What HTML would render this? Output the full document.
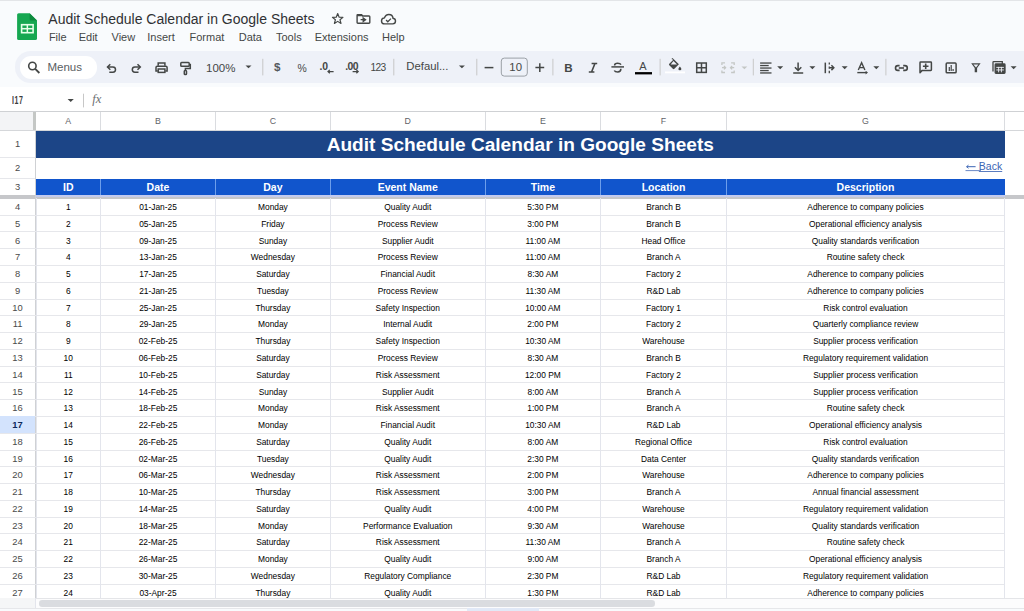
<!DOCTYPE html>
<html><head><meta charset="utf-8"><style>
*{margin:0;padding:0;box-sizing:border-box}
html,body{width:1024px;height:611px;overflow:hidden;background:#f9fbfd;font-family:"Liberation Sans",sans-serif;position:relative}
.abs{position:absolute}
#topline{position:absolute;left:0;top:0;width:1024px;height:1px;background:#e3e5e8}
#title{position:absolute;left:48.3px;top:10.2px;font-size:14px;line-height:18px;color:#303134;white-space:nowrap}
.menu{position:absolute;top:30.5px;font-size:11px;line-height:13px;color:#444746;white-space:nowrap}
#toolbar{position:absolute;left:14.6px;top:51.4px;width:1040px;height:31.2px;border-radius:15.6px;background:#eef1f8}
#search{position:absolute;left:19.5px;top:56.3px;width:77.8px;height:22.4px;border-radius:11.2px;background:#fff}
.tt{position:absolute;font-size:11px;line-height:13px;color:#444746;white-space:nowrap}
.sep{position:absolute;top:58.8px;width:1px;height:16.6px;background:#c7c7c7}
.ico{position:absolute}
#fbar{position:absolute;left:0;top:87px;width:1024px;height:24.4px;background:#fff}
#fbarline{position:absolute;left:0;top:111.2px;width:1024px;height:1px;background:#cfd1d4}
#grid{position:absolute;left:0;top:0;width:1024px;height:611px}
#gridbg{position:absolute;left:0;top:112px;width:1024px;height:499px;background:#fff}
.hl{position:absolute;left:0;width:1005px;height:1px;background:#e6e7eb}
.vl{position:absolute;top:198px;width:1px;height:400px;background:#e3e5ec}
.rn{position:absolute;left:0;width:35px;height:16.775px;line-height:16.775px;padding-top:0.6px;text-align:center;font-size:9.4px;color:#4a4a4a}
.rn.sel{background:#d3e3fd;color:#0b2a5c;font-weight:bold}
.cell{position:absolute;height:16.775px;line-height:16.775px;padding-top:0.6px;text-align:center;font-size:8.4px;color:#000;white-space:nowrap;overflow:hidden}
#corner{position:absolute;left:0;top:112px;width:33.5px;height:18.6px;background:#f3f4f6}
#cornerbar{position:absolute;left:33.4px;top:112px;width:2.6px;height:18.6px;background:#c4c7c5}
#hdrline{position:absolute;left:0;top:130.2px;width:1024px;height:1px;background:#d5d7da}
#hdrtop{position:absolute;left:0;top:111.4px;width:1024px;height:1px;background:#cfd1d4}
.ch{position:absolute;top:112px;height:18.6px;line-height:18.6px;text-align:center;font-size:8.8px;color:#5f6368}
.chl{position:absolute;top:112px;width:1px;height:18.6px;background:#dadce0}
#r1{position:absolute;left:36px;top:131.4px;width:968.5px;height:26.6px;background:#1c4587;color:#fff;font-weight:bold;font-size:19.1px;line-height:25.9px;padding-top:0.8px;text-align:center;white-space:nowrap}
#r3{position:absolute;left:36px;top:178.6px;width:968.5px;height:16.6px;background:#1155cc}
.hc{position:absolute;top:178.6px;height:16.6px;line-height:16.6px;padding-top:0.5px;text-align:center;color:#fff;font-weight:bold;font-size:10.5px;white-space:nowrap}
.hcl{position:absolute;top:178.6px;width:1px;height:16.6px;background:#6d9eeb}
#freeze{position:absolute;left:0;top:195.2px;width:1024px;height:3.4px;background:#c6c7ca}
#freezeb{position:absolute;left:36px;top:195.2px;width:968.5px;height:1.5px;background:#c3cbee}
#back{position:absolute;right:21.8px;top:158.5px;font-size:10.5px;line-height:14px;color:#3a64b4;text-decoration:underline;text-decoration-color:#5a7cc0;white-space:nowrap}
.rnf{position:absolute;left:0;width:35px;text-align:center;padding-top:0px;font-size:9.4px;color:#4a4a4a}
#rhline{position:absolute;left:35.4px;top:130.6px;width:1px;height:470px;background:#cfd1d4}
#hscroll{position:absolute;left:0;top:598px;width:1024px;height:10px;background:#fcfcfd}
#hscrollL{position:absolute;left:0;top:598px;width:35.5px;height:10px;background:#f5f6f7}
#thumb{position:absolute;left:38.5px;top:600.2px;width:616.5px;height:6.4px;border-radius:3.2px;background:#dadce0}
#botline{position:absolute;left:0;top:607.8px;width:1024px;height:1px;background:#e6e7ea}
#botbg{position:absolute;left:0;top:608.8px;width:1024px;height:3px;background:#f9fbfd}
#tab{position:absolute;left:467px;top:607.8px;width:71.5px;height:4px;background:#e1e9f7}

</style></head><body>
<div id="topline"></div>
<div id="title">Audit Schedule Calendar in Google Sheets</div>
<div class="menu" style="left:48.9px">File</div>
<div class="menu" style="left:78.7px">Edit</div>
<div class="menu" style="left:111.5px">View</div>
<div class="menu" style="left:147.3px">Insert</div>
<div class="menu" style="left:189.5px">Format</div>
<div class="menu" style="left:238.7px">Data</div>
<div class="menu" style="left:276px">Tools</div>
<div class="menu" style="left:314.7px">Extensions</div>
<div class="menu" style="left:382px">Help</div>
<div id="toolbar"></div>
<div id="search"></div>
<div class="tt" style="left:47.5px;top:60.8px;font-size:11.5px;color:#5a5e62">Menus</div>
<div class="tt" style="left:206px;top:62.2px;font-size:11.5px">100%</div>
<div class="tt" style="left:406.3px;top:60px;font-size:11.3px">Defaul...</div>
<div id="fbar"></div>
<div id="fbarline"></div><svg class="ico" style="left:0;top:0" width="1024" height="112" viewBox="0 0 1024 112">
<g fill="none" stroke="#444746" stroke-width="1.5">
 <!-- search -->
 <circle cx="32.4" cy="66" r="3.7" stroke-width="1.6"/>
 <path d="M35.2 68.8 L39.4 73" stroke-width="1.8"/>
 <!-- undo -->
 <path d="M109.3 72.2 H112.9 A2.6 2.6 0 0 0 112.9 67 H107.8"/>
 <path d="M110.3 64.3 L107.5 67 L110.3 69.7"/>
 <!-- redo -->
 <path d="M138.5 72.2 H134.9 A2.6 2.6 0 0 1 134.9 67 H140"/>
 <path d="M137.5 64.3 L140.3 67 L137.5 69.7"/>
 <!-- print -->
 <path d="M158.2 65.8 V63 H164.9 V65.8"/>
 <path d="M157.8 71 H156 V67.5 Q156 66.2 157.3 66.2 H165.8 Q167.1 66.2 167.1 67.5 V71 H165.3"/>
 <rect x="158.2" y="69" width="6.7" height="3.4"/>
 <!-- paint format -->
 <rect x="180.8" y="62.6" width="8.4" height="3.6" rx="0.8"/>
 <path d="M189.2 64.4 H190.3 V68.4 H185.4 V70.3"/>
 <rect x="184.3" y="70.4" width="2.2" height="4.2" rx="0.8"/>
</g>
<!-- separators -->
<g fill="#c7c7c7">
 <rect x="262.3" y="58.8" width="1" height="16.6"/>
 <rect x="393.3" y="58.8" width="1" height="16.6"/>
 <rect x="476.3" y="58.8" width="1" height="16.6"/>
 <rect x="552.4" y="58.8" width="1" height="16.6"/>
 <rect x="659.6" y="58.8" width="1" height="16.6"/>
 <rect x="752.8" y="58.8" width="1" height="16.6"/>
 <rect x="885.4" y="58.8" width="1" height="16.6"/>
</g>
<!-- dropdown triangles -->
<g fill="#444746">
 <path d="M245.5 65.4 H251.5 L248.5 68.3 Z"/>
 <path d="M458.9 65.4 H464.9 L461.9 68.3 Z"/>
 <path d="M777.2 66.2 H783.2 L780.2 69.2 Z"/>
 <path d="M809.4 66.2 H815.4 L812.4 69.2 Z"/>
 <path d="M841.7 66.2 H847.7 L844.7 69.2 Z"/>
 <path d="M873.3 66.2 H879.3 L876.3 69.2 Z"/>
 <path d="M1010.6 66.2 H1016.6 L1013.6 69.2 Z"/>
 <path d="M67.6 99 H73.8 L70.7 102 Z"/>
</g>
<path d="M741.5 66.4 H747.3 L744.4 69.3 Z" fill="#c4c7c5"/>
<!-- minus/plus -->
<g stroke="#444746" stroke-width="1.5">
 <path d="M484.6 67.6 H493.4"/>
 <path d="M535.4 67.6 H544.2 M539.8 63.2 V72"/>
</g>
<rect x="501.3" y="58.1" width="26" height="18" rx="3" fill="none" stroke="#9aa0a6" stroke-width="1"/>
<!-- strikethrough -->
<g fill="none" stroke="#444746" stroke-width="1.5">
 <path d="M611.4 66.9 H624"/>
 <path d="M621 64.6 Q620.2 63.3 617.7 63.3 Q614.6 63.3 614.6 65.4"/>
 <path d="M620.9 68.8 Q620.9 72 617.7 72 Q615 72 614.3 70.5"/>
</g>
<!-- text color A bar -->
<rect x="635" y="72.1" width="17" height="2.3" fill="#000"/>
<!-- fill bucket -->
<g fill="#444746">
 <path d="M671.4 58.9 L672.5 57.9 L674.3 59.7 L678.9 64.3 L674.4 68.8 Q673.6 69.6 672.8 68.8 L669.3 65.3 Q668.6 64.5 669.3 63.8 L673.3 59.8 Z M670.7 64.4 L677 64.4 L673.5 60.9 Z"/>
 <path d="M679.9 66.6 Q681.4 68.4 681.4 69.1 Q681.4 70.3 679.9 70.3 Q678.4 70.3 678.4 69.1 Q678.4 68.4 679.9 66.6 Z"/>
</g>
<rect x="665" y="71.5" width="20" height="1.8" fill="#fff"/>
<!-- borders -->
<g fill="none" stroke="#444746" stroke-width="1.5">
 <rect x="696.7" y="63" width="9.6" height="9.4"/>
 <path d="M701.5 63 V72.4 M696.7 67.7 H706.3"/>
</g>
<!-- merge disabled -->
<g fill="none" stroke="#c4c7c5" stroke-width="1.3">
 <path d="M721.9 65 V62.9 H725 M721.9 70.4 V72.5 H725 M734.2 65 V62.9 H731.1 M734.2 70.4 V72.5 H731.1"/>
 <path d="M722 67.7 H725.5 M730.6 67.7 H734.2 M724 66 L725.6 67.7 L724 69.4 M732.1 66 L730.5 67.7 L732.1 69.4"/>
</g>
<!-- align left -->
<g fill="#444746">
 <rect x="760.1" y="62.4" width="11.4" height="1.3"/>
 <rect x="760.1" y="64.9" width="8.6" height="1.3"/>
 <rect x="760.1" y="67.4" width="11.4" height="1.3"/>
 <rect x="760.1" y="69.9" width="8.6" height="1.3"/>
 <rect x="760.1" y="72.3" width="11.4" height="1.3"/>
</g>
<!-- valign bottom -->
<g fill="none" stroke="#444746" stroke-width="1.5">
 <path d="M798.1 62.5 V70.3 M794.9 67.3 L798.1 70.5 L801.3 67.3"/>
 <path d="M793.2 73 H803.2"/>
</g>
<!-- wrap -->
<g fill="none" stroke="#444746" stroke-width="1.5">
 <path d="M825.3 62.6 V73.2"/>
 <path d="M829.3 62.6 V64.6 M829.3 66.6 V68.8 M829.3 70.8 V73.2" stroke-width="1.3"/>
 <path d="M829.5 67.7 H833.8 M831.4 65.3 L833.8 67.7 L831.4 70.1"/>
</g>
<!-- rotate A -->
<g fill="none" stroke="#444746" stroke-width="1.4">
 <path d="M858.3 70 L861.6 62.8 L864.9 70 M859.5 67.6 H863.7"/>
 <path d="M857.3 72.6 H866.5"/>
</g>
<path d="M865.6 70.8 L868 72.6 L865.6 74.4 Z" fill="#444746"/>
<!-- link -->
<g fill="none" stroke="#444746" stroke-width="1.6">
 <path d="M899.6 65.6 H897.9 Q895.5 65.6 895.5 68 Q895.5 70.4 897.9 70.4 H899.6"/>
 <path d="M903.2 65.6 H904.9 Q907.3 65.6 907.3 68 Q907.3 70.4 904.9 70.4 H903.2"/>
 <path d="M898.8 68 H904"/>
</g>
<!-- comment -->
<g fill="none" stroke="#444746" stroke-width="1.5">
 <path d="M920 72.6 V62.7 Q920 62.1 920.6 62.1 H930.8 Q931.4 62.1 931.4 62.7 V69.8 Q931.4 70.4 930.8 70.4 H922.2 Z" stroke-linejoin="round"/>
 <path d="M925.7 63.5 V69 M922.9 66.25 H928.5" stroke-width="1.6"/>
</g>
<!-- chart -->
<g fill="none" stroke="#444746" stroke-width="1.5">
 <rect x="946.2" y="63" width="9.9" height="9.8" rx="0.9"/>
</g>
<g fill="#444746">
 <rect x="948.7" y="67" width="1.2" height="4"/>
 <rect x="950.6" y="65" width="1.2" height="6"/>
 <rect x="952.5" y="69" width="1.2" height="2"/>
</g>
<!-- filter -->
<path d="M971.2 63.2 H980.6 L977.1 67.9 V72.3 H974.7 V67.9 Z" fill="#444746"/>
<path d="M973.4 64.6 H978.4 L976 67.6 Z" fill="#eef1f8"/>
<!-- functions/calculator -->
<g fill="none" stroke="#444746" stroke-width="1.3">
 <path d="M993 71.5 V62.3 Q993 61.7 993.6 61.7 H1002.3 V64"/>
 <rect x="995.2" y="64" width="9.8" height="9.3" rx="0.8"/>
</g>
<rect x="995.2" y="64" width="9.8" height="9.3" rx="0.8" fill="#444746"/>
<g fill="#eef1f8">
 <rect x="996.3" y="66.9" width="7.6" height="0.9"/>
 <rect x="996.3" y="69.5" width="7.6" height="0.9"/>
 <rect x="998.2" y="66.9" width="0.9" height="5.4"/>
 <rect x="1000.9" y="66.9" width="0.9" height="5.4"/>
</g>
<!-- decimal arrows -->
<g fill="none" stroke="#444746" stroke-width="1.2">
 <path d="M328 71.6 H333.6 M329.8 69.9 L328 71.6 L329.8 73.3"/>
 <path d="M352.6 71.6 H358.2 M356.4 69.9 L358.2 71.6 L356.4 73.3"/>
</g>
<!-- italic -->
<path d="M591.6 63.6 H597.2 M594.9 63.6 L591.6 71.9 M588.8 71.9 H594.4" fill="none" stroke="#444746" stroke-width="1.5"/>
<!-- formula bar separator and fx -->
<rect x="83" y="93.7" width="1" height="13.7" fill="#c7c7c7"/>
</svg>
<div class="tt" style="left:274px;top:60.3px;font-size:11.6px;font-weight:bold;color:#55595d">$</div>
<div class="tt" style="left:297.4px;top:61.5px;font-size:10.4px">%</div>
<div class="tt" style="left:319.6px;top:59.5px;font-size:10.4px;font-weight:bold;letter-spacing:-0.3px">.0</div>
<div class="tt" style="left:345.2px;top:59.5px;font-size:10.4px;font-weight:bold;letter-spacing:-0.6px">.00</div>
<div class="tt" style="left:370.6px;top:61px;font-size:10.2px;letter-spacing:-0.75px">123</div>
<div class="tt" style="left:509.3px;top:61.2px;font-size:11.4px">10</div>
<div class="tt" style="left:564.2px;top:60.6px;font-size:11.6px;font-weight:bold">B</div>
<div class="tt" style="left:639.2px;top:60.3px;font-size:11px">A</div>
<div class="tt" style="left:11.8px;top:94.2px;font-size:10.6px;font-weight:bold;letter-spacing:0.9px;transform:scaleX(0.66);transform-origin:0 0;color:#3c3c3c">I17</div>
<div class="tt" style="left:92.2px;top:93px;font-size:12.6px;font-style:italic;font-family:'Liberation Serif',serif;color:#6b6e72">fx</div>

<div id="gridbg"></div>
<div id="hdrtop"></div>
<div id="corner"></div>
<div id="cornerbar"></div>
<div class="ch" style="left:36px;width:64.5px">A</div>
<div class="ch" style="left:100.5px;width:115px">B</div>
<div class="ch" style="left:215.5px;width:114.8px">C</div>
<div class="ch" style="left:330.3px;width:154.9px">D</div>
<div class="ch" style="left:485.2px;width:115.3px">E</div>
<div class="ch" style="left:600.5px;width:126px">F</div>
<div class="ch" style="left:726.5px;width:278px">G</div>
<div class="chl" style="left:100px"></div>
<div class="chl" style="left:215px"></div>
<div class="chl" style="left:330px"></div>
<div class="chl" style="left:485px"></div>
<div class="chl" style="left:600px"></div>
<div class="chl" style="left:726px"></div>
<div class="chl" style="left:1004px"></div>
<div id="hdrline"></div>
<div class="rnf" style="top:131.4px;height:25.9px;line-height:25.9px">1</div>
<div class="rnf" style="top:157.3px;height:21.4px;line-height:21.4px">2</div>
<div class="rnf" style="top:178.7px;height:16.5px;line-height:16.5px">3</div>
<div class="hl" style="top:156.8px;left:0;width:36px"></div>
<div class="hl" style="top:178.2px;left:0;width:36px"></div>
<div id="r1">Audit Schedule Calendar in Google Sheets</div>
<div id="back">Back</div><svg class="ico" style="left:965px;top:158px" width="16" height="16" viewBox="965 158 16 16"><path d="M966.8 166.7 H975.6" stroke="#3a64b4" stroke-width="1"/><path d="M968.5 165.1 L966.5 166.7 L968.5 168.3" fill="none" stroke="#3a64b4" stroke-width="0.9"/><path d="M965.5 170.6 H981" stroke="#5a7cc0" stroke-width="0.9"/></svg>
<div id="r3"></div>
<div class="hc" style="left:36px;width:64.5px">ID</div>
<div class="hc" style="left:100.5px;width:115px">Date</div>
<div class="hc" style="left:215.5px;width:114.8px">Day</div>
<div class="hc" style="left:330.3px;width:154.9px">Event Name</div>
<div class="hc" style="left:485.2px;width:115.3px">Time</div>
<div class="hc" style="left:600.5px;width:126px">Location</div>
<div class="hc" style="left:726.5px;width:278px">Description</div>
<div class="hcl" style="left:100px"></div>
<div class="hcl" style="left:215px"></div>
<div class="hcl" style="left:330px"></div>
<div class="hcl" style="left:485px"></div>
<div class="hcl" style="left:600px"></div>
<div class="hcl" style="left:726px"></div>
<div id="freeze"></div><div id="freezeb"></div>
<div id="rhline"></div>
<svg class="ico" style="left:16px;top:12px" width="23" height="30" viewBox="0 0 23 30">
 <path d="M2.6 1.2 H13.6 L21 8.6 V26.4 Q21 28 19.4 28 H2.6 Q1.1 28 1.1 26.4 V2.7 Q1.1 1.2 2.6 1.2 Z" fill="#16a751"/>
 <path d="M13.6 1.2 L21 8.6 H15.2 Q13.6 8.6 13.6 7 Z" fill="#0d8a3e"/>
 <rect x="5.6" y="12.7" width="11.5" height="8" fill="none" stroke="#e6ffe9" stroke-width="1.6"/>
 <line x1="5.6" y1="16.7" x2="17.1" y2="16.7" stroke="#e6ffe9" stroke-width="1.5"/>
 <line x1="11.35" y1="12.7" x2="11.35" y2="20.7" stroke="#e6ffe9" stroke-width="1.5"/>
</svg>
<svg class="ico" style="left:331.2px;top:11.6px" width="13.4" height="13.4" viewBox="0 0 24 24"><path d="M12 2.8 L14.6 9.3 L21.4 9.6 L16.1 13.9 L17.9 20.6 L12 16.8 L6.1 20.6 L7.9 13.9 L2.6 9.6 L9.4 9.3 Z" fill="none" stroke="#444746" stroke-width="2.1" stroke-linejoin="round"/></svg>
<svg class="ico" style="left:355.5px;top:14px" width="15" height="10" viewBox="0 0 15 10"><path d="M1.5 0.8 H5.6 L6.8 2 H13 Q13.8 2 13.8 2.8 V8.6 Q13.8 9.3 13 9.3 H1.9 Q1.1 9.3 1.1 8.6 V1.2 Q1.1 0.8 1.5 0.8 Z" fill="none" stroke="#444746" stroke-width="1.4"/><path d="M1.1 0.8 H5.6 L6.8 2.2 H1.1 Z" fill="#444746"/><path d="M4.6 5.7 H8 M7.2 3.9 L9.6 5.7 L7.2 7.5 Z" stroke="#444746" stroke-width="1.3" fill="#444746"/></svg>
<svg class="ico" style="left:379.5px;top:12px" width="17" height="14" viewBox="0 0 24 20"><path d="M6.5 17 Q2 17 2 12.8 Q2 8.8 6.2 8.4 Q7.8 3.5 12.5 3.5 Q17.8 3.5 18.5 9 Q22 9.5 22 13 Q22 17 18 17 Z" fill="none" stroke="#444746" stroke-width="2"/><path d="M8.5 11.5 L11 14 L15.5 9.5" fill="none" stroke="#444746" stroke-width="1.8"/></svg>

<div id="grid">
<div class="hl" style="top:214.68px"></div><div class="hl" style="top:231.45px"></div><div class="hl" style="top:248.22px"></div><div class="hl" style="top:265px"></div><div class="hl" style="top:281.77px"></div><div class="hl" style="top:298.55px"></div><div class="hl" style="top:315.32px"></div><div class="hl" style="top:332.1px"></div><div class="hl" style="top:348.88px"></div><div class="hl" style="top:365.65px"></div><div class="hl" style="top:382.42px"></div><div class="hl" style="top:399.2px"></div><div class="hl" style="top:415.98px"></div><div class="hl" style="top:432.75px"></div><div class="hl" style="top:449.52px"></div><div class="hl" style="top:466.3px"></div><div class="hl" style="top:483.07px"></div><div class="hl" style="top:499.85px"></div><div class="hl" style="top:516.62px"></div><div class="hl" style="top:533.4px"></div><div class="hl" style="top:550.17px"></div><div class="hl" style="top:566.95px"></div><div class="hl" style="top:583.73px"></div><div class="hl" style="top:600.5px"></div><div class="vl" style="left:35.5px"></div><div class="vl" style="left:100px"></div><div class="vl" style="left:215px"></div><div class="vl" style="left:329.8px"></div><div class="vl" style="left:484.7px"></div><div class="vl" style="left:600px"></div><div class="vl" style="left:726px"></div><div class="vl" style="left:1004px"></div><div class="rn" style="top:198.4px">4</div><div class="cell" style="top:198.4px;left:36px;width:64.5px">1</div><div class="cell" style="top:198.4px;left:100.5px;width:115px">01-Jan-25</div><div class="cell" style="top:198.4px;left:215.5px;width:114.8px">Monday</div><div class="cell" style="top:198.4px;left:330.3px;width:154.9px">Quality Audit</div><div class="cell" style="top:198.4px;left:485.2px;width:115.3px">5:30 PM</div><div class="cell" style="top:198.4px;left:600.5px;width:126px">Branch B</div><div class="cell" style="top:198.4px;left:726.5px;width:278px">Adherence to company policies</div><div class="rn" style="top:215.18px">5</div><div class="cell" style="top:215.18px;left:36px;width:64.5px">2</div><div class="cell" style="top:215.18px;left:100.5px;width:115px">05-Jan-25</div><div class="cell" style="top:215.18px;left:215.5px;width:114.8px">Friday</div><div class="cell" style="top:215.18px;left:330.3px;width:154.9px">Process Review</div><div class="cell" style="top:215.18px;left:485.2px;width:115.3px">3:00 PM</div><div class="cell" style="top:215.18px;left:600.5px;width:126px">Branch B</div><div class="cell" style="top:215.18px;left:726.5px;width:278px">Operational efficiency analysis</div><div class="rn" style="top:231.95px">6</div><div class="cell" style="top:231.95px;left:36px;width:64.5px">3</div><div class="cell" style="top:231.95px;left:100.5px;width:115px">09-Jan-25</div><div class="cell" style="top:231.95px;left:215.5px;width:114.8px">Sunday</div><div class="cell" style="top:231.95px;left:330.3px;width:154.9px">Supplier Audit</div><div class="cell" style="top:231.95px;left:485.2px;width:115.3px">11:00 AM</div><div class="cell" style="top:231.95px;left:600.5px;width:126px">Head Office</div><div class="cell" style="top:231.95px;left:726.5px;width:278px">Quality standards verification</div><div class="rn" style="top:248.72px">7</div><div class="cell" style="top:248.72px;left:36px;width:64.5px">4</div><div class="cell" style="top:248.72px;left:100.5px;width:115px">13-Jan-25</div><div class="cell" style="top:248.72px;left:215.5px;width:114.8px">Wednesday</div><div class="cell" style="top:248.72px;left:330.3px;width:154.9px">Process Review</div><div class="cell" style="top:248.72px;left:485.2px;width:115.3px">11:00 AM</div><div class="cell" style="top:248.72px;left:600.5px;width:126px">Branch A</div><div class="cell" style="top:248.72px;left:726.5px;width:278px">Routine safety check</div><div class="rn" style="top:265.5px">8</div><div class="cell" style="top:265.5px;left:36px;width:64.5px">5</div><div class="cell" style="top:265.5px;left:100.5px;width:115px">17-Jan-25</div><div class="cell" style="top:265.5px;left:215.5px;width:114.8px">Saturday</div><div class="cell" style="top:265.5px;left:330.3px;width:154.9px">Financial Audit</div><div class="cell" style="top:265.5px;left:485.2px;width:115.3px">8:30 AM</div><div class="cell" style="top:265.5px;left:600.5px;width:126px">Factory 2</div><div class="cell" style="top:265.5px;left:726.5px;width:278px">Adherence to company policies</div><div class="rn" style="top:282.27px">9</div><div class="cell" style="top:282.27px;left:36px;width:64.5px">6</div><div class="cell" style="top:282.27px;left:100.5px;width:115px">21-Jan-25</div><div class="cell" style="top:282.27px;left:215.5px;width:114.8px">Tuesday</div><div class="cell" style="top:282.27px;left:330.3px;width:154.9px">Process Review</div><div class="cell" style="top:282.27px;left:485.2px;width:115.3px">11:30 AM</div><div class="cell" style="top:282.27px;left:600.5px;width:126px">R&amp;D Lab</div><div class="cell" style="top:282.27px;left:726.5px;width:278px">Adherence to company policies</div><div class="rn" style="top:299.05px">10</div><div class="cell" style="top:299.05px;left:36px;width:64.5px">7</div><div class="cell" style="top:299.05px;left:100.5px;width:115px">25-Jan-25</div><div class="cell" style="top:299.05px;left:215.5px;width:114.8px">Thursday</div><div class="cell" style="top:299.05px;left:330.3px;width:154.9px">Safety Inspection</div><div class="cell" style="top:299.05px;left:485.2px;width:115.3px">10:00 AM</div><div class="cell" style="top:299.05px;left:600.5px;width:126px">Factory 1</div><div class="cell" style="top:299.05px;left:726.5px;width:278px">Risk control evaluation</div><div class="rn" style="top:315.82px">11</div><div class="cell" style="top:315.82px;left:36px;width:64.5px">8</div><div class="cell" style="top:315.82px;left:100.5px;width:115px">29-Jan-25</div><div class="cell" style="top:315.82px;left:215.5px;width:114.8px">Monday</div><div class="cell" style="top:315.82px;left:330.3px;width:154.9px">Internal Audit</div><div class="cell" style="top:315.82px;left:485.2px;width:115.3px">2:00 PM</div><div class="cell" style="top:315.82px;left:600.5px;width:126px">Factory 2</div><div class="cell" style="top:315.82px;left:726.5px;width:278px">Quarterly compliance review</div><div class="rn" style="top:332.6px">12</div><div class="cell" style="top:332.6px;left:36px;width:64.5px">9</div><div class="cell" style="top:332.6px;left:100.5px;width:115px">02-Feb-25</div><div class="cell" style="top:332.6px;left:215.5px;width:114.8px">Thursday</div><div class="cell" style="top:332.6px;left:330.3px;width:154.9px">Safety Inspection</div><div class="cell" style="top:332.6px;left:485.2px;width:115.3px">10:30 AM</div><div class="cell" style="top:332.6px;left:600.5px;width:126px">Warehouse</div><div class="cell" style="top:332.6px;left:726.5px;width:278px">Supplier process verification</div><div class="rn" style="top:349.38px">13</div><div class="cell" style="top:349.38px;left:36px;width:64.5px">10</div><div class="cell" style="top:349.38px;left:100.5px;width:115px">06-Feb-25</div><div class="cell" style="top:349.38px;left:215.5px;width:114.8px">Saturday</div><div class="cell" style="top:349.38px;left:330.3px;width:154.9px">Process Review</div><div class="cell" style="top:349.38px;left:485.2px;width:115.3px">8:30 AM</div><div class="cell" style="top:349.38px;left:600.5px;width:126px">Branch B</div><div class="cell" style="top:349.38px;left:726.5px;width:278px">Regulatory requirement validation</div><div class="rn" style="top:366.15px">14</div><div class="cell" style="top:366.15px;left:36px;width:64.5px">11</div><div class="cell" style="top:366.15px;left:100.5px;width:115px">10-Feb-25</div><div class="cell" style="top:366.15px;left:215.5px;width:114.8px">Saturday</div><div class="cell" style="top:366.15px;left:330.3px;width:154.9px">Risk Assessment</div><div class="cell" style="top:366.15px;left:485.2px;width:115.3px">12:00 PM</div><div class="cell" style="top:366.15px;left:600.5px;width:126px">Factory 2</div><div class="cell" style="top:366.15px;left:726.5px;width:278px">Supplier process verification</div><div class="rn" style="top:382.92px">15</div><div class="cell" style="top:382.92px;left:36px;width:64.5px">12</div><div class="cell" style="top:382.92px;left:100.5px;width:115px">14-Feb-25</div><div class="cell" style="top:382.92px;left:215.5px;width:114.8px">Sunday</div><div class="cell" style="top:382.92px;left:330.3px;width:154.9px">Supplier Audit</div><div class="cell" style="top:382.92px;left:485.2px;width:115.3px">8:00 AM</div><div class="cell" style="top:382.92px;left:600.5px;width:126px">Branch A</div><div class="cell" style="top:382.92px;left:726.5px;width:278px">Supplier process verification</div><div class="rn" style="top:399.7px">16</div><div class="cell" style="top:399.7px;left:36px;width:64.5px">13</div><div class="cell" style="top:399.7px;left:100.5px;width:115px">18-Feb-25</div><div class="cell" style="top:399.7px;left:215.5px;width:114.8px">Monday</div><div class="cell" style="top:399.7px;left:330.3px;width:154.9px">Risk Assessment</div><div class="cell" style="top:399.7px;left:485.2px;width:115.3px">1:00 PM</div><div class="cell" style="top:399.7px;left:600.5px;width:126px">Branch A</div><div class="cell" style="top:399.7px;left:726.5px;width:278px">Routine safety check</div><div class="rn sel" style="top:416.48px">17</div><div class="cell" style="top:416.48px;left:36px;width:64.5px">14</div><div class="cell" style="top:416.48px;left:100.5px;width:115px">22-Feb-25</div><div class="cell" style="top:416.48px;left:215.5px;width:114.8px">Monday</div><div class="cell" style="top:416.48px;left:330.3px;width:154.9px">Financial Audit</div><div class="cell" style="top:416.48px;left:485.2px;width:115.3px">10:30 AM</div><div class="cell" style="top:416.48px;left:600.5px;width:126px">R&amp;D Lab</div><div class="cell" style="top:416.48px;left:726.5px;width:278px">Operational efficiency analysis</div><div class="rn" style="top:433.25px">18</div><div class="cell" style="top:433.25px;left:36px;width:64.5px">15</div><div class="cell" style="top:433.25px;left:100.5px;width:115px">26-Feb-25</div><div class="cell" style="top:433.25px;left:215.5px;width:114.8px">Saturday</div><div class="cell" style="top:433.25px;left:330.3px;width:154.9px">Quality Audit</div><div class="cell" style="top:433.25px;left:485.2px;width:115.3px">8:00 AM</div><div class="cell" style="top:433.25px;left:600.5px;width:126px">Regional Office</div><div class="cell" style="top:433.25px;left:726.5px;width:278px">Risk control evaluation</div><div class="rn" style="top:450.02px">19</div><div class="cell" style="top:450.02px;left:36px;width:64.5px">16</div><div class="cell" style="top:450.02px;left:100.5px;width:115px">02-Mar-25</div><div class="cell" style="top:450.02px;left:215.5px;width:114.8px">Tuesday</div><div class="cell" style="top:450.02px;left:330.3px;width:154.9px">Quality Audit</div><div class="cell" style="top:450.02px;left:485.2px;width:115.3px">2:30 PM</div><div class="cell" style="top:450.02px;left:600.5px;width:126px">Data Center</div><div class="cell" style="top:450.02px;left:726.5px;width:278px">Quality standards verification</div><div class="rn" style="top:466.8px">20</div><div class="cell" style="top:466.8px;left:36px;width:64.5px">17</div><div class="cell" style="top:466.8px;left:100.5px;width:115px">06-Mar-25</div><div class="cell" style="top:466.8px;left:215.5px;width:114.8px">Wednesday</div><div class="cell" style="top:466.8px;left:330.3px;width:154.9px">Risk Assessment</div><div class="cell" style="top:466.8px;left:485.2px;width:115.3px">2:00 PM</div><div class="cell" style="top:466.8px;left:600.5px;width:126px">Warehouse</div><div class="cell" style="top:466.8px;left:726.5px;width:278px">Adherence to company policies</div><div class="rn" style="top:483.57px">21</div><div class="cell" style="top:483.57px;left:36px;width:64.5px">18</div><div class="cell" style="top:483.57px;left:100.5px;width:115px">10-Mar-25</div><div class="cell" style="top:483.57px;left:215.5px;width:114.8px">Thursday</div><div class="cell" style="top:483.57px;left:330.3px;width:154.9px">Risk Assessment</div><div class="cell" style="top:483.57px;left:485.2px;width:115.3px">3:00 PM</div><div class="cell" style="top:483.57px;left:600.5px;width:126px">Branch A</div><div class="cell" style="top:483.57px;left:726.5px;width:278px">Annual financial assessment</div><div class="rn" style="top:500.35px">22</div><div class="cell" style="top:500.35px;left:36px;width:64.5px">19</div><div class="cell" style="top:500.35px;left:100.5px;width:115px">14-Mar-25</div><div class="cell" style="top:500.35px;left:215.5px;width:114.8px">Saturday</div><div class="cell" style="top:500.35px;left:330.3px;width:154.9px">Quality Audit</div><div class="cell" style="top:500.35px;left:485.2px;width:115.3px">4:00 PM</div><div class="cell" style="top:500.35px;left:600.5px;width:126px">Warehouse</div><div class="cell" style="top:500.35px;left:726.5px;width:278px">Regulatory requirement validation</div><div class="rn" style="top:517.12px">23</div><div class="cell" style="top:517.12px;left:36px;width:64.5px">20</div><div class="cell" style="top:517.12px;left:100.5px;width:115px">18-Mar-25</div><div class="cell" style="top:517.12px;left:215.5px;width:114.8px">Monday</div><div class="cell" style="top:517.12px;left:330.3px;width:154.9px">Performance Evaluation</div><div class="cell" style="top:517.12px;left:485.2px;width:115.3px">9:30 AM</div><div class="cell" style="top:517.12px;left:600.5px;width:126px">Warehouse</div><div class="cell" style="top:517.12px;left:726.5px;width:278px">Quality standards verification</div><div class="rn" style="top:533.9px">24</div><div class="cell" style="top:533.9px;left:36px;width:64.5px">21</div><div class="cell" style="top:533.9px;left:100.5px;width:115px">22-Mar-25</div><div class="cell" style="top:533.9px;left:215.5px;width:114.8px">Saturday</div><div class="cell" style="top:533.9px;left:330.3px;width:154.9px">Risk Assessment</div><div class="cell" style="top:533.9px;left:485.2px;width:115.3px">11:30 AM</div><div class="cell" style="top:533.9px;left:600.5px;width:126px">Branch A</div><div class="cell" style="top:533.9px;left:726.5px;width:278px">Routine safety check</div><div class="rn" style="top:550.67px">25</div><div class="cell" style="top:550.67px;left:36px;width:64.5px">22</div><div class="cell" style="top:550.67px;left:100.5px;width:115px">26-Mar-25</div><div class="cell" style="top:550.67px;left:215.5px;width:114.8px">Monday</div><div class="cell" style="top:550.67px;left:330.3px;width:154.9px">Quality Audit</div><div class="cell" style="top:550.67px;left:485.2px;width:115.3px">9:00 AM</div><div class="cell" style="top:550.67px;left:600.5px;width:126px">Branch A</div><div class="cell" style="top:550.67px;left:726.5px;width:278px">Operational efficiency analysis</div><div class="rn" style="top:567.45px">26</div><div class="cell" style="top:567.45px;left:36px;width:64.5px">23</div><div class="cell" style="top:567.45px;left:100.5px;width:115px">30-Mar-25</div><div class="cell" style="top:567.45px;left:215.5px;width:114.8px">Wednesday</div><div class="cell" style="top:567.45px;left:330.3px;width:154.9px">Regulatory Compliance</div><div class="cell" style="top:567.45px;left:485.2px;width:115.3px">2:30 PM</div><div class="cell" style="top:567.45px;left:600.5px;width:126px">R&amp;D Lab</div><div class="cell" style="top:567.45px;left:726.5px;width:278px">Regulatory requirement validation</div><div class="rn" style="top:584.23px">27</div><div class="cell" style="top:584.23px;left:36px;width:64.5px">24</div><div class="cell" style="top:584.23px;left:100.5px;width:115px">03-Apr-25</div><div class="cell" style="top:584.23px;left:215.5px;width:114.8px">Thursday</div><div class="cell" style="top:584.23px;left:330.3px;width:154.9px">Quality Audit</div><div class="cell" style="top:584.23px;left:485.2px;width:115.3px">1:30 PM</div><div class="cell" style="top:584.23px;left:600.5px;width:126px">R&amp;D Lab</div><div class="cell" style="top:584.23px;left:726.5px;width:278px">Adherence to company policies</div>
</div>
<div id="hscroll"></div><div class="hl" style="top:597.6px;left:0;width:1024px;background:#e4e5e8"></div><div id="hscrollL"></div><div class="vl" style="left:35.4px;top:598px;height:10px"></div><div id="thumb"></div><div id="botline"></div><div id="botbg"></div><div id="tab"></div>
</body></html>
